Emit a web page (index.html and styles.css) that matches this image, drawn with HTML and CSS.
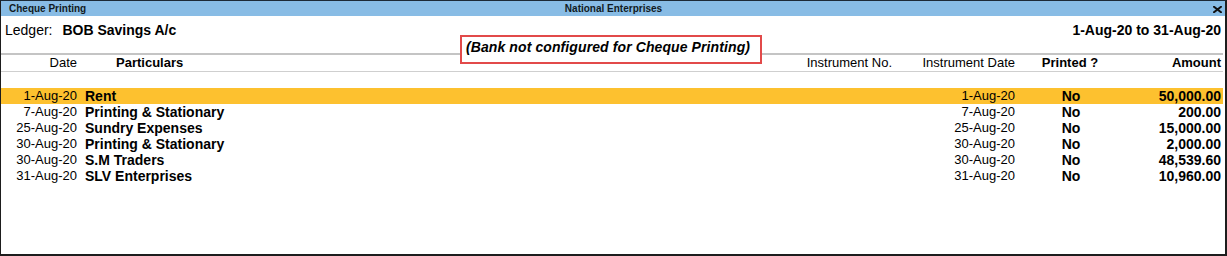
FILE: index.html
```html
<!DOCTYPE html>
<html lang="en">
<head>
<meta charset="utf-8">
<title>Cheque Printing</title>
<link rel="stylesheet" href="styles.css">
</head>
<body>
<div class="window">
  <div class="titlebar">
    <span class="tb-left">Cheque Printing</span>
    <span class="tb-center">National Enterprises</span>
    <span class="tb-right">
      <svg class="close" width="9" height="7" viewBox="0 0 9 7" aria-label="Close">
        <path d="M1 0.8 L8 6.2 M8 0.8 L1 6.2" stroke="#111" stroke-width="2" stroke-linecap="square" fill="none"/>
      </svg>
    </span>
  </div>
  <div class="content">
    <div class="ledger-row">
      <div class="ledger">
        <span class="ledger-label">Ledger:</span>
        <span class="ledger-name">BOB Savings A/c</span>
      </div>
      <div class="period">1-Aug-20 to 31-Aug-20</div>
    </div>
    <div class="notice">(Bank not configured for Cheque Printing)</div>
    <div class="rule-thick"></div>
    <div class="cols head">
      <div class="c-date">Date</div>
      <div class="c-part head-part">Particulars</div>
      <div class="c-ino">Instrument No.</div>
      <div class="c-idate">Instrument Date</div>
      <div class="c-prn strong">Printed ?</div>
      <div class="c-amt strong">Amount</div>
    </div>
    <div class="rule-thin"></div>
    <div class="spacer"></div>
    <div class="rows">
      <div class="cols row selected">
        <div class="c-date">1-Aug-20</div>
        <div class="c-part">Rent</div>
        <div class="c-ino"></div>
        <div class="c-idate">1-Aug-20</div>
        <div class="c-prn">No</div>
        <div class="c-amt">50,000.00</div>
      </div>
      <div class="cols row">
        <div class="c-date">7-Aug-20</div>
        <div class="c-part">Printing &amp; Stationary</div>
        <div class="c-ino"></div>
        <div class="c-idate">7-Aug-20</div>
        <div class="c-prn">No</div>
        <div class="c-amt">200.00</div>
      </div>
      <div class="cols row">
        <div class="c-date">25-Aug-20</div>
        <div class="c-part">Sundry Expenses</div>
        <div class="c-ino"></div>
        <div class="c-idate">25-Aug-20</div>
        <div class="c-prn">No</div>
        <div class="c-amt">15,000.00</div>
      </div>
      <div class="cols row">
        <div class="c-date">30-Aug-20</div>
        <div class="c-part">Printing &amp; Stationary</div>
        <div class="c-ino"></div>
        <div class="c-idate">30-Aug-20</div>
        <div class="c-prn">No</div>
        <div class="c-amt">2,000.00</div>
      </div>
      <div class="cols row">
        <div class="c-date">30-Aug-20</div>
        <div class="c-part">S.M Traders</div>
        <div class="c-ino"></div>
        <div class="c-idate">30-Aug-20</div>
        <div class="c-prn">No</div>
        <div class="c-amt">48,539.60</div>
      </div>
      <div class="cols row">
        <div class="c-date">31-Aug-20</div>
        <div class="c-part">SLV Enterprises</div>
        <div class="c-ino"></div>
        <div class="c-idate">31-Aug-20</div>
        <div class="c-prn">No</div>
        <div class="c-amt">10,960.00</div>
      </div>
    </div>
  </div>
</div>
</body>
</html>
```

FILE: styles.css
```css
* {
  box-sizing: border-box;
}

html, body {
  margin: 0;
  padding: 0;
  background: #ffffff;
}

body {
  font-family: "Liberation Sans", Arial, sans-serif;
  color: #000;
  font-size: 13px;
}

.window {
  width: 1227px;
  height: 256px;
  border-top: 1px solid #1d2a36;
  border-left: 1px solid #1d1d1d;
  border-right: 2px solid #1d1d1d;
  border-bottom: 2px solid #1d1d1d;
  display: flex;
  flex-direction: column;
  overflow: hidden;
}

.titlebar {
  height: 15px;
  background: #88bce5;
  display: grid;
  grid-template-columns: 1fr auto 1fr;
  align-items: center;
  padding: 0 3px 0 8px;
  font-size: 10px;
  font-weight: bold;
  line-height: 15px;
  color: #111a22;
}

.tb-center {
  position: relative;
  left: -2px;
}

.tb-right {
  display: flex;
  justify-content: flex-end;
  align-items: center;
}

.close {
  display: block;
  margin-top: 1px;
}

.content {
  position: relative;
  flex: 1;
  padding-right: 2px;
}

.ledger-row {
  height: 37px;
  padding: 6px 2px 0 4px;
  display: flex;
  justify-content: space-between;
  align-items: flex-start;
  font-size: 14px;
  line-height: 16px;
}

.ledger-name {
  font-weight: bold;
  margin-left: 6px;
}

.period {
  font-weight: bold;
}

.notice {
  position: absolute;
  top: 19px;
  left: 459px;
  width: 302px;
  height: 29px;
  border: 2px solid #e24a4a;
  background: #ffffff;
  padding: 2px 6px 0 0;
  text-align: center;
  font-size: 14px;
  line-height: 16px;
  font-weight: bold;
  font-style: italic;
  letter-spacing: 0.1px;
}

.rule-thick {
  height: 2px;
  background: #c4c4c4;
}

.rule-thin {
  height: 1px;
  background: #cfcfcf;
}

.spacer {
  height: 16px;
}

.cols {
  display: grid;
  grid-template-columns: 76px 1fr 92px 123px 110px 96px;
  height: 16px;
  line-height: 16px;
  padding-right: 2px;
  white-space: nowrap;
}

.c-date,
.c-ino,
.c-idate,
.c-amt {
  text-align: right;
}

.c-prn {
  text-align: center;
}

.c-part {
  padding-left: 8px;
}

.head {
  font-size: 13px;
}

.head-part {
  padding-left: 39px;
  font-weight: bold;
}

.strong {
  font-weight: bold;
}

.row {
  font-size: 13px;
}

.row .c-part,
.row .c-prn,
.row .c-amt {
  font-weight: bold;
  font-size: 14px;
}

.row .c-prn {
  padding-left: 2px;
}

.selected {
  background: #fdc12f;
}
```
